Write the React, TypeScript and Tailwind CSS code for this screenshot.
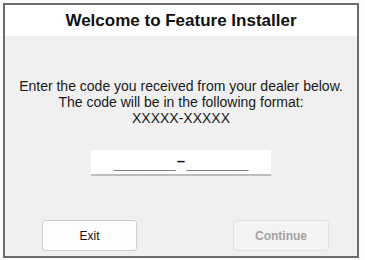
import React from 'react';

const App: React.FC = () => {
    return (
        <div className="w-[365px] h-[260px] bg-[#fbfbfb] pt-[3px] pl-[3px] font-['Liberation_Sans',Arial,sans-serif]">
            <div className="w-[356px] h-[255px] border-2 border-[#6c6c6c] bg-[#f0f0f0] flex flex-col">
                {/* Header */}
                <div className="h-[31px] bg-white flex items-center justify-center">
                    <h1 className="text-[17px] font-bold text-[#111] leading-none">Welcome to Feature Installer</h1>
                </div>

                {/* Body */}
                <div className="flex-1 flex flex-col items-center pt-[42px]">
                    <p className="text-[14px] leading-[16px] text-[#1a1a1a] text-center">
                        Enter the code you received from your dealer below.
                        <br />
                        The code will be in the following format:
                        <br />
                        XXXXX-XXXXX
                    </p>

                    {/* Code input */}
                    <div className="mt-[24px] w-[180px] h-[26px] bg-white border-b-2 border-[#bdbdbd] flex items-end justify-center pb-[3px]">
                        <span className="text-[14px] leading-none text-[#111] font-bold">
                            ________<span className="text-[15px] mx-[1px] align-[3px]">–</span>________
                        </span>
                    </div>

                    {/* Actions */}
                    <div className="mt-auto mb-[5px] w-full flex justify-between pl-[37px] pr-[28px]">
                        <button className="w-[95px] h-[31px] bg-[#fdfdfd] border border-[#cfcfcf] rounded-[3px] text-[12px] text-[#111]">
                            Exit
                        </button>
                        <button className="w-[96px] h-[31px] bg-[#f3f3f3] border border-[#e2e2e2] rounded-[3px] text-[12px] font-bold text-[#a3a3a3]">
                            Continue
                        </button>
                    </div>
                </div>
            </div>
        </div>
    );
};

export default App;
